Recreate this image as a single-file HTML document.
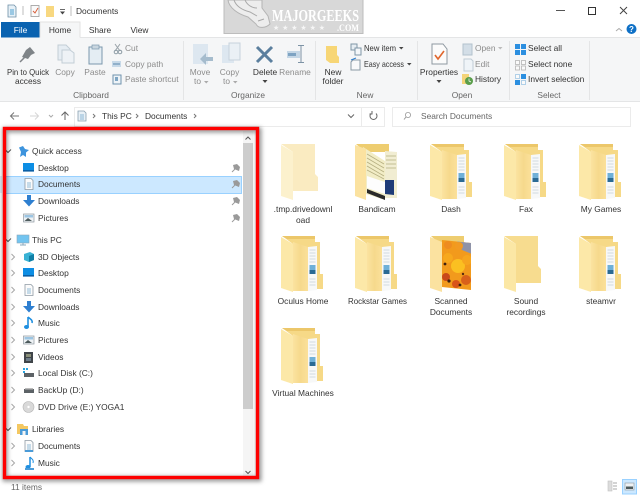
<!DOCTYPE html>
<html><head><meta charset="utf-8"><style>
html,body{margin:0;padding:0;background:#fff;width:640px;height:495px;overflow:hidden}
svg{display:block;filter:blur(.3px)}
text{font-family:"Liberation Sans",sans-serif;font-size:8.4px;fill:#333}
.g{fill:#8c8c8c}.m{text-anchor:middle}.l{fill:#666}
</style></head><body>
<svg width="640" height="495" viewBox="0 0 640 495" xmlns="http://www.w3.org/2000/svg">
<defs>
<filter id="b2" x="-10%" y="-10%" width="120%" height="120%"><feGaussianBlur stdDeviation="2"/></filter>
<linearGradient id="mid" x1="0" y1="0" x2="1" y2="0"><stop offset="0" stop-color="#fbe3a0"/><stop offset=".5" stop-color="#f6d98c"/><stop offset="1" stop-color="#fbe09a"/></linearGradient>
<g id="fold">
<path d="M1 0H34V6H39V38H42V53H12V8Z" fill="#f6d987"/>
<path d="M1 0H34V3H12L6 3Z" fill="#ecc76a"/>
<path d="M12 6L27 11V55H12Z" fill="url(#mid)"/>
<path d="M27 11L36 10V54L27 55Z" fill="#f7f8f8"/>
<path d="M28.500 14h6M28.500 17h6M28.500 20h6M28.500 23h6M28.500 26h6M28.500 43h6M28.500 46h6M28.500 49h6" stroke="#c6d0d7" stroke-width=".8"/>
<path d="M28.500 29h6v9h-6Z" fill="#6fb0d8"/><path d="M28.500 34h6v4h-6Z" fill="#2a6a94"/>
<path d="M0 1L12 8V56L0 52Z" fill="#fce8a8"/>
</g>
<g id="empty">
<path d="M0 0H34V30L37 33V47H12V8Z" fill="#f7dc8f"/>
<path d="M0 1L12 8V56L0 52Z" fill="#fbe7a5"/>
</g>
<g id="pin"><path d="M-3 -3L1 -4L4 -1L3 3L-2 1Z" fill="#9a9a9a"/><path d="M-1 1L-4 4" stroke="#9a9a9a"/></g>
<g id="desk"><rect x="-6" y="-5" width="11" height="8.500" fill="#0d8ee4"/><rect x="-6" y="2" width="11" height="1.600" fill="#0b5fa5"/></g>
<g id="doc"><path d="M-4 -5.500H2L4 -3.500V5.500H-4Z" fill="#fbfbfb" stroke="#8e9aa4" stroke-width=".8"/><path d="M-2 -1h4M-2 1h4M-2 3h4" stroke="#6fa6cc" stroke-width=".8"/></g>
<g id="dl"><path d="M-2 -6H2V-1H6L0 5.500L-6 -1H-2Z" fill="#2e7fd0"/></g>
<g id="pic"><rect x="-5.500" y="-4" width="10.500" height="8" fill="#eef2f5" stroke="#8d979f" stroke-width=".7"/><path d="M-4.500 3L-1 0L3 3Z" fill="#4d5a5c"/><rect x="-4.500" y="-3" width="8.500" height="2.500" fill="#9cc5e3"/></g>
<path id="cr" d="M-1.500 -3L1.500 0L-1.500 3" fill="none" stroke="#a6a6a6" stroke-width="1"/>
<path id="cd" d="M-3 -1.500L0 1.500L3 -1.500" fill="none" stroke="#555" stroke-width="1"/>
<path id="ar" d="M0 0H4.500L2.250 2.500Z"/>
</defs>

<rect width="640" height="495" fill="#fff"/>

<!-- quick access toolbar -->
<g transform="translate(12 11)"><path d="M-4 -6H2L4 -4V6H-4Z" fill="#e6f0f7" stroke="#6d8fa6" stroke-width=".8"/><path d="M-2 -1h4M-2 1h4M-2 3h4" stroke="#4fa0cf"/></g>
<path d="M23 6V15" stroke="#bcbcbc"/>
<g transform="translate(35 11)"><rect x="-4" y="-5.500" width="8" height="11" fill="#fafafa" stroke="#9a9a9a" stroke-width=".8"/><path d="M-2 0L0 2L3 -3" stroke="#d9603c" fill="none"/></g>
<path d="M46 6H54V17H46Z" fill="#f8d880"/>
<path d="M60 9.500h5" stroke="#444" stroke-width=".8"/><path d="M60 11.500h5l-2.500 3z" fill="#444"/>
<path d="M71 6V16" stroke="#bcbcbc"/>
<text x="76" y="14">Documents</text>

<!-- watermark -->
<rect x="224" y="-1" width="139" height="34.500" fill="#d8d8d8" stroke="#bdbdbd"/>
<path d="M228 0C229 8 238 14 248 17L256 24C258 29 266 28 270 24L268 16L262 8L262 0Z" fill="#ededed" stroke="#b4b4b4"/>
<path d="M234 0C236 6 242 10 250 12L257 16M245 0C247 5 252 8 257 8M258 21L264 19" stroke="#a8a8a8" fill="none"/>
<text x="272" y="21" textLength="87" lengthAdjust="spacingAndGlyphs" style="font-family:'Liberation Serif',serif;font-size:17px;font-weight:bold;fill:#fff">MAJORGEEKS</text>
<text x="273" y="30" textLength="52" style="font-size:7px;fill:#f6f6f6">★★★★★★</text>
<text x="337" y="31" textLength="22" lengthAdjust="spacingAndGlyphs" style="font-family:'Liberation Serif',serif;font-size:9px;font-weight:bold;fill:#fff">.COM</text>

<!-- window controls -->
<path d="M556 10.500H565" stroke="#555"/>
<rect x="588.500" y="7.500" width="7" height="7" fill="none" stroke="#333"/>
<path d="M620 7L627 14M627 7L620 14" stroke="#444"/>

<!-- tabs -->
<rect x="1" y="22" width="39" height="16" fill="#0a62b0"/>
<text x="20.500" y="33" class="m" style="fill:#fff">File</text>
<path d="M40 38V22H80V38" fill="#f5f6f7" stroke="#e2e2e2"/>
<text x="60" y="33" class="m">Home</text>
<text x="100" y="33" class="m">Share</text>
<text x="139.500" y="33" class="m">View</text>
<path d="M616 31L619 28.500L622 31" stroke="#aaa" fill="none"/>
<circle cx="631.500" cy="29" r="5" fill="#0e70c6"/>
<text x="631.500" y="32" class="m" style="fill:#fff;font-weight:bold;font-size:8px">?</text>

<!-- ribbon -->
<rect x="0" y="37.500" width="640" height="64" fill="#f5f6f7"/>
<path d="M80 37.500H640M0 101.500H640" stroke="#e4e5e6"/>
<path d="M183.500 41V100M315.500 41V100M417.500 41V100M509.500 41V100M589.500 41V100" stroke="#e4e5e6"/>

<!-- clipboard -->
<path d="M22 57L26 50L30 47L35 53L31 55L28 59Z" fill="#7f8488"/><path d="M25 57L20 62" stroke="#7f8488" stroke-width="1.500"/>
<text x="7" y="75" textLength="42" lengthAdjust="spacingAndGlyphs">Pin to Quick</text><text x="28" y="84" class="m">access</text>
<path d="M58 45H66L70 49V60H58Z" fill="#e6edf3" stroke="#c2cdd6"/><path d="M62 50H70L74 53V63H62Z" fill="#eef2f6" stroke="#c2cdd6"/>
<text x="65" y="75" class="m g">Copy</text>
<rect x="89" y="47" width="13" height="17" fill="#e4edf3" stroke="#7b98ad"/><rect x="92" y="45" width="7" height="4" fill="#c9d6df" stroke="#7b98ad" stroke-width=".7"/>
<text x="95" y="75" class="m g">Paste</text>
<path d="M115 44L120 51M120 44L115 51" stroke="#9aa3a9"/><circle cx="116" cy="52" r="1.800" fill="none" stroke="#8a99a3"/><circle cx="120" cy="52" r="1.800" fill="none" stroke="#8a99a3"/>
<text x="125" y="51" class="g">Cut</text>
<rect x="112" y="61" width="9" height="6" fill="#c7d9e8"/><path d="M113 64h7" stroke="#5b86ab"/>
<text x="125" y="67" class="g">Copy path</text>
<rect x="113" y="75" width="8" height="9" fill="#eef3f7" stroke="#6f93ad"/><rect x="115" y="77" width="3" height="4" fill="#7ea6c4"/>
<text x="125" y="82" class="g">Paste shortcut</text>
<text x="91" y="98" class="m l">Clipboard</text>

<!-- organize -->
<path d="M193 44H208V64H193Z" fill="#dde7f0"/><path d="M200 59L206 53V57H213V61H206V65Z" fill="#a6bccd"/>
<text x="200" y="75" class="m g">Move</text><text x="194" y="84" class="g">to</text><use href="#ar" x="204" y="81" fill="#aaa"/>
<path d="M222 45H234V63H222Z" fill="#dde7f0"/><path d="M229 43H240V60H229Z" fill="#eaf0f5" stroke="#c6d2dc"/>
<text x="229.500" y="75" class="m g">Copy</text><text x="223" y="84" class="g">to</text><use href="#ar" x="233" y="81" fill="#aaa"/>
<path d="M257 47L272 62M272 47L257 62" stroke="#5b7f9e" stroke-width="3"/>
<text x="265" y="75" class="m">Delete</text>
<path d="M262.500 80H267.500L265 83Z" fill="#444"/>
<rect x="287" y="51" width="13" height="7" fill="#c4d6e5"/><rect x="288" y="53" width="8" height="3" fill="#7ea3c2"/>
<path d="M301 46V62M298 45.500H304M298 62.500H304" stroke="#7d93a5"/>
<text x="295" y="75" class="m g">Rename</text>
<text x="248" y="98" class="m l">Organize</text>

<!-- new -->
<path d="M326 46H337V55L339 57V63H330L326 60Z" fill="#f7d676"/>
<text x="333" y="75" class="m">New</text><text x="333" y="84" class="m">folder</text>
<rect x="351" y="44" width="6" height="6" fill="#e6edf2" stroke="#7e95a6"/><rect x="355" y="48" width="6" height="7" fill="#f4f7f9" stroke="#7e95a6"/>
<text x="364" y="51" textLength="32" lengthAdjust="spacingAndGlyphs">New item</text><use href="#ar" x="399" y="47" fill="#444"/>
<path d="M353 60H360V70H351V62Z" fill="#f8f9fa" stroke="#8a9aa6"/><path d="M351 60L356 58" stroke="#2e7fd0"/>
<text x="364" y="67" textLength="40" lengthAdjust="spacingAndGlyphs">Easy access</text><use href="#ar" x="407" y="63" fill="#444"/>
<text x="365" y="98" class="m l">New</text>

<!-- open -->
<path d="M432 44H443L447 49V64H432Z" fill="#fbfbfb" stroke="#8e98a0"/><path d="M435 55L438 59L444 51" fill="none" stroke="#e0662d" stroke-width="1.600"/>
<text x="439" y="75" class="m">Properties</text>
<path d="M436.500 80H441.500L439 83Z" fill="#444"/>
<rect x="463" y="44" width="9" height="11" fill="#d3dee7" stroke="#b3c2cd"/>
<text x="475" y="51" class="g">Open</text><use href="#ar" x="498" y="47" fill="#bbb"/>
<path d="M464 59H471L473 61V71H464Z" fill="#eff4f8" stroke="#c0ccd6"/>
<text x="475" y="67" class="g">Edit</text>
<rect x="462" y="74" width="7" height="10" fill="#f4d479"/><circle cx="469" cy="81" r="4" fill="#5a9e4b"/><path d="M469 78.500V81L471 82" stroke="#fff" fill="none" stroke-width=".7"/>
<text x="475" y="82">History</text>
<text x="462" y="98" class="m l">Open</text>

<!-- select -->
<g fill="#2c8fe0"><rect x="515" y="44" width="5" height="5"/><rect x="521" y="44" width="5" height="5"/><rect x="515" y="50" width="5" height="5"/><rect x="521" y="50" width="5" height="5"/></g>
<text x="528" y="51">Select all</text>
<g fill="#fafafa" stroke="#b5b5b5" stroke-width=".8"><rect x="515.500" y="60.500" width="4" height="4"/><rect x="521.500" y="60.500" width="4" height="4"/><rect x="515.500" y="66" width="4" height="4"/><rect x="521.500" y="66" width="4" height="4"/></g>
<text x="528" y="67">Select none</text>
<g><rect x="521" y="74" width="5" height="5" fill="#2c8fe0"/><rect x="515" y="80" width="5" height="5" fill="#2c8fe0"/><rect x="515.500" y="74.500" width="4" height="4" fill="#fafafa" stroke="#9fc6e4" stroke-width=".8"/><rect x="521.500" y="80.500" width="4" height="4" fill="#fafafa" stroke="#9fc6e4" stroke-width=".8"/></g>
<text x="528" y="82">Invert selection</text>
<text x="549" y="98" class="m l">Select</text>

<!-- address row -->
<path d="M11 116H19M14 112.500L10.500 116L14 119.500" fill="none" stroke="#777"/>
<path d="M30 116H38M35 112.500L38.500 116L35 119.500" fill="none" stroke="#d6d6d6"/>
<path d="M49 115L51 117L53 115" fill="none" stroke="#aaa"/>
<path d="M65 120V112M61.500 115.500L65 112L68.500 115.500" fill="none" stroke="#666"/>
<rect x="74.500" y="107.500" width="310" height="19" fill="#fff" stroke="#ebebeb"/>
<rect x="392.500" y="107.500" width="238" height="19" fill="#fff" stroke="#ebebeb"/>
<g transform="translate(82 116)"><path d="M-4 -5H2L4 -3V5H-4Z" fill="#e8f0f6" stroke="#8aa0b0" stroke-width=".8"/><path d="M-2 -1h4M-2 1h4M-2 3h4" stroke="#6fa6cc" stroke-width=".8"/></g>
<path d="M93 114L95 116L93 118M136 114L138 116L136 118M194 114L196 116L194 118" fill="none" stroke="#777"/>
<text x="102" y="119">This PC</text>
<text x="145" y="119">Documents</text>
<path d="M348 114.500L351 117.500L354 114.500" fill="none" stroke="#666"/>
<path d="M361.500 108V126" stroke="#ebebeb"/>
<path d="M371 113.500A3.500 3.500 0 1 0 376 113.500M372 111V114H369.500" fill="none" stroke="#666"/>
<circle cx="408" cy="115" r="2.600" fill="none" stroke="#999" stroke-width=".8"/><path d="M406 117L404 119.500" stroke="#999"/>
<text x="421" y="119" class="l">Search Documents</text>

<!-- nav pane -->
<rect x="0" y="176" width="2" height="17" fill="#dfeaf3"/>
<rect x="5.500" y="176.500" width="236" height="17" fill="#cce8ff" stroke="#99d1ff"/>
<rect x="243" y="143" width="10" height="266" fill="#cdcdcd"/>
<rect x="243" y="131" width="10" height="12" fill="#f5f5f5"/><rect x="243" y="409" width="10" height="67" fill="#f5f5f5"/>
<path d="M245.500 139.500L248 137L250.500 139.500" fill="none" stroke="#555"/>
<path d="M245.500 471L248 473.500L250.500 471" fill="none" stroke="#555"/>

<use href="#cd" x="8" y="151"/>
<path d="M19 147.500L23 146L25 149L29 150L26 152.500L26 157L23 155L20 157L21 152Z" fill="#3d94dd"/>
<text x="32" y="154">Quick access</text>
<use href="#desk" x="29" y="168"/><text x="38" y="171">Desktop</text>
<use href="#doc" x="29" y="184"/><text x="38" y="187">Documents</text>
<use href="#dl" x="29" y="201"/><text x="38" y="204">Downloads</text>
<use href="#pic" x="29" y="218"/><text x="38" y="221">Pictures</text>
<use href="#pin" x="236" y="168"/><use href="#pin" x="236" y="184"/><use href="#pin" x="236" y="201"/><use href="#pin" x="236" y="218"/>

<use href="#cd" x="8" y="240"/>
<rect x="17" y="235" width="12" height="8" fill="#72c4f0" stroke="#8aa8bc" stroke-width=".6"/><path d="M20 245H26M23 243V245" stroke="#8aa8bc"/>
<text x="32" y="243">This PC</text>
<use href="#cr" x="13" y="257"/><path d="M24 254L30 252L34 254V260L29 262L24 260Z" fill="#3ab2d4"/><path d="M29 256V262L34 260V254Z" fill="#0f7fa6"/><text x="38" y="260">3D Objects</text>
<use href="#cr" x="13" y="273"/><use href="#desk" x="29" y="273"/><text x="38" y="276">Desktop</text>
<use href="#cr" x="13" y="290"/><use href="#doc" x="29" y="290"/><text x="38" y="293">Documents</text>
<use href="#cr" x="13" y="307"/><use href="#dl" x="29" y="307"/><text x="38" y="310">Downloads</text>
<use href="#cr" x="13" y="323"/><path d="M28 317V327M28 317C30 319 33 320 32 323" fill="none" stroke="#1f8fe0" stroke-width="1.600"/><ellipse cx="26.500" cy="327" rx="2.500" ry="2" fill="#1f8fe0"/><text x="38" y="326">Music</text>
<use href="#cr" x="13" y="340"/><use href="#pic" x="29" y="340"/><text x="38" y="343">Pictures</text>
<use href="#cr" x="13" y="357"/><rect x="24" y="352" width="9" height="11" fill="#3f4449"/><rect x="26" y="354" width="5" height="3" fill="#8a8f78"/><rect x="26" y="358" width="5" height="3" fill="#6d7c88"/><text x="38" y="360">Videos</text>
<use href="#cr" x="13" y="373"/><rect x="24" y="373" width="10" height="4" fill="#5c6266"/><rect x="23" y="368" width="2" height="2" fill="#2aa3de"/><rect x="26" y="368" width="2" height="2" fill="#2aa3de"/><rect x="23" y="371" width="2" height="2" fill="#2aa3de"/><text x="38" y="376">Local Disk (C:)</text>
<use href="#cr" x="13" y="390"/><rect x="24" y="389" width="10" height="4" fill="#5c6266"/><rect x="25" y="388" width="8" height="1.500" fill="#bbb"/><text x="38" y="393">BackUp (D:)</text>
<use href="#cr" x="13" y="407"/><circle cx="28.500" cy="407" r="5.500" fill="#d9d9d9" stroke="#b8b8b8" stroke-width=".6"/><circle cx="28.500" cy="407" r="1.200" fill="#fff"/><text x="38" y="410">DVD Drive (E:) YOGA1</text>

<use href="#cd" x="8" y="429"/>
<path d="M17 424H23L24 426H28V434H17Z" fill="#f4c862"/><rect x="20" y="429" width="8" height="6" fill="#4a9bd8"/><rect x="22.500" y="431" width="3" height="4" fill="#f4f4f4"/>
<text x="32" y="432">Libraries</text>
<use href="#cr" x="13" y="446"/><use href="#doc" x="29" y="446"/><rect x="25" y="450" width="8" height="2" fill="#4a9bd8"/><text x="38" y="449">Documents</text>
<use href="#cr" x="13" y="463"/><path d="M30 457V467" stroke="#1f8fe0" stroke-width="1.500"/><path d="M30 457C32 459 34 460 33 463" fill="none" stroke="#1f8fe0"/><ellipse cx="28" cy="467" rx="2.500" ry="2" fill="#1f8fe0"/><rect x="25" y="468" width="9" height="2" fill="#4a9bd8"/><text x="38" y="466">Music</text>

<!-- red box -->
<rect x="5" y="130" width="254" height="349" fill="none" stroke="#000" stroke-opacity=".42" stroke-width="5" filter="url(#b2)"/>
<rect x="4.500" y="128.500" width="253" height="349" fill="none" stroke="#fe0000" stroke-width="3.400"/>

<!-- folders row 1 -->
<g transform="translate(281 144)" opacity=".55"><use href="#empty"/></g>
<g transform="translate(355 144)">
<path d="M1 0H34V8H10Z" fill="#eecd70"/>
<path d="M8 3L30 17V56L11 50Z" fill="#f2edc6"/>
<path d="M30 7L42 8V54L30 54Z" fill="#f1edd2"/>
<path d="M12 10L29 20M12 14L29 24M12 18L29 28M12 22L29 32M12 26L29 35M31 12H41M31 16H41M31 20H41M31 24H41" stroke="#b5ae80" stroke-width=".8"/>
<path d="M12 32L30 38V50L12 44Z" fill="#fdfdfd"/>
<path d="M12 45L30 52V56L12 49Z" fill="#2a2a2a"/>
<path d="M30 36H39V51L30 50Z" fill="#1f3c78"/>
<path d="M0 1L11 5V56L0 52Z" fill="#fbe2a0"/>
</g>
<use href="#fold" x="430" y="144"/>
<use href="#fold" x="504" y="144"/>
<use href="#fold" x="579" y="144"/>
<text x="303" y="212" class="m">.tmp.drivedownl</text><text x="303" y="223" class="m">oad</text>
<text x="377" y="212" class="m">Bandicam</text>
<text x="451" y="212" class="m">Dash</text>
<text x="526" y="212" class="m">Fax</text>
<text x="601" y="212" class="m">My Games</text>

<!-- folders row 2 -->
<use href="#fold" x="281" y="236"/>
<use href="#fold" x="355" y="236"/>
<g transform="translate(430 236)">
<path d="M1 0H34V8H10Z" fill="#eecd70"/>
<clipPath id="pc"><path d="M12 4L41 7V54L12 51Z"/></clipPath>
<g clip-path="url(#pc)">
<rect x="12" y="3" width="30" height="52" fill="#f29a1c"/>
<path d="M26 3H42V18L32 14Z" fill="#8f93a8"/>
<circle cx="18" cy="9" r="4" fill="#ee8c20"/><circle cx="29" cy="10" r="4" fill="#f29a22"/>
<circle cx="28" cy="30" r="7" fill="#fbc021"/><circle cx="18" cy="22" r="5" fill="#f7a81d"/><circle cx="37" cy="24" r="5" fill="#f6a51e"/>
<circle cx="16" cy="41" r="4" fill="#c9481a"/><circle cx="36" cy="44" r="5" fill="#d9611a"/><circle cx="26" cy="48" r="4" fill="#d8541a"/>
<circle cx="15" cy="28" r="1.400" fill="#3c2010"/><circle cx="19" cy="45" r="1.600" fill="#3c2010"/><circle cx="33" cy="38" r="1.200" fill="#5a2c10"/><circle cx="30" cy="49" r="1.400" fill="#3c2010"/>
</g>
<path d="M0 1L12 6V56L0 52Z" fill="#fbe2a0"/>
</g>
<use href="#empty" x="504" y="236"/>
<use href="#fold" x="579" y="236"/>
<text x="303" y="304" class="m">Oculus Home</text>
<text x="348" y="304" textLength="59" lengthAdjust="spacingAndGlyphs">Rockstar Games</text>
<text x="451" y="304" class="m">Scanned</text><text x="451" y="315" class="m">Documents</text>
<text x="526" y="304" class="m">Sound</text><text x="526" y="315" class="m">recordings</text>
<text x="601" y="304" class="m">steamvr</text>

<!-- row 3 -->
<use href="#fold" x="281" y="328"/>
<text x="303" y="396" class="m">Virtual Machines</text>

<!-- status bar -->
<text x="11" y="490" class="l">11 items</text>
<rect x="608" y="481" width="4" height="10" fill="#dcdcdc" stroke="#c0c0c0" stroke-width=".6"/><path d="M613 483h4M613 486h4M613 489h4" stroke="#aaa"/>
<rect x="622.500" y="479.500" width="14" height="14.500" fill="#cce8ff" stroke="#99d1ff"/>
<rect x="625" y="483" width="9" height="7" fill="#eef2f5" stroke="#8d979f" stroke-width=".6"/><rect x="626" y="486.500" width="7" height="2.500" fill="#4d5a5c"/>
</svg>
</body></html>
